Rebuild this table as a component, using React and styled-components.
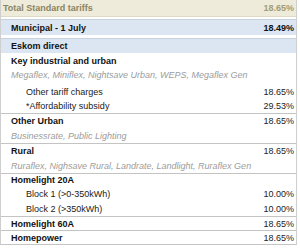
import React from "react";
import styled, { createGlobalStyle } from "styled-components";

const Global = createGlobalStyle`
  html, body { margin: 0; padding: 0; background: #ffffff; }
  body { font-family: "Liberation Sans", Arial, sans-serif; }
`;

const Table = styled.div`
  width: 297px;
  box-sizing: border-box;
  border-left: 1px solid #cfcfcf;
  border-right: 1px solid #cfcfcf;
  border-bottom: 1px solid #c4c4c4;
  box-shadow: 0 1px 1px rgba(0, 0, 0, 0.08);
  font-size: 9px;
  color: #222;
  display: flex;
  flex-direction: column;
`;

const HeaderRow = styled.div`
  height: 17px;
  box-sizing: border-box;
  display: flex;
  align-items: center;
  justify-content: space-between;
  padding: 0 2px 0 2px;
  background: #eeebda;
  color: #8a8463;
  font-weight: bold;
  border-bottom: 1px solid #dedbc8;
  margin-bottom: 2px;
`;

const HeaderValue = styled.span`
  color: #a39d74;
`;

const BandRow = styled.div`
  height: ${(p) => p.$h}px;
  box-sizing: border-box;
  display: flex;
  align-items: center;
  justify-content: space-between;
  padding: 0 2px 0 10px;
  background: #dce6f2;
  border-top: 1px solid #c9d2dc;
  color: #111;
  font-weight: bold;
  margin-bottom: ${(p) => p.$mb || 0}px;
`;

const Section = styled.div`
  display: flex;
  flex-direction: column;
  border-bottom: 1px solid #c4c4c4;
  padding-top: ${(p) => p.$pt || 0}px;
  &:last-child { border-bottom: none; }
`;

const Line = styled.div`
  height: ${(p) => p.$h}px;
  display: flex;
  align-items: center;
  justify-content: space-between;
  padding: 0 2px 0 ${(p) => (p.$indent ? 25 : 10)}px;
  margin-top: ${(p) => p.$mt || 0}px;
  color: #1a1a1a;
`;

const Title = styled.span`
  font-weight: bold;
  color: #111;
`;

const Note = styled.div`
  height: ${(p) => p.$h}px;
  display: flex;
  align-items: center;
  padding-left: 10px;
  font-style: italic;
  color: #9c9c9c;
`;

const Value = styled.span`
  color: #222;
`;

export default function App() {
  return (
    <>
      <Global />
      <Table>
        <HeaderRow>
          <span>Total Standard tariffs</span>
          <HeaderValue>18.65%</HeaderValue>
        </HeaderRow>
        <BandRow $h={16} $mb={3}>
          <span>Municipal - 1 July</span>
          <span>18.49%</span>
        </BandRow>
        <BandRow $h={15}>
          <span>Eskom direct</span>
        </BandRow>
        <Section $pt={1}>
          <Line $h={14}>
            <Title>Key industrial and urban</Title>
          </Line>
          <Note $h={13}>Megaflex, Miniflex, Nightsave Urban, WEPS, Megaflex Gen</Note>
          <Line $h={15} $indent $mt={3}>
            <span>Other tariff charges</span>
            <Value>18.65%</Value>
          </Line>
          <Line $h={14} $indent>
            <span>*Affordability subsidy</span>
            <Value>29.53%</Value>
          </Line>
        </Section>
        <Section>
          <Line $h={14}>
            <Title>Other Urban</Title>
            <Value>18.65%</Value>
          </Line>
          <Note $h={15}>Businessrate, Public Lighting</Note>
        </Section>
        <Section>
          <Line $h={14}>
            <Title>Rural</Title>
            <Value>18.65%</Value>
          </Line>
          <Note $h={15}>Ruraflex, Nighsave Rural, Landrate, Landlight, Ruraflex Gen</Note>
        </Section>
        <Section>
          <Line $h={12}>
            <Title>Homelight 20A</Title>
          </Line>
          <Line $h={15} $indent>
            <span>Block 1 (&gt;0-350kWh)</span>
            <Value>10.00%</Value>
          </Line>
          <Line $h={15} $indent>
            <span>Block 2 (&gt;350kWh)</span>
            <Value>10.00%</Value>
          </Line>
        </Section>
        <Section>
          <Line $h={13}>
            <Title>Homelight 60A</Title>
            <Value>18.65%</Value>
          </Line>
        </Section>
        <Section>
          <Line $h={13}>
            <Title>Homepower</Title>
            <Value>18.65%</Value>
          </Line>
        </Section>
      </Table>
    </>
  );
}
